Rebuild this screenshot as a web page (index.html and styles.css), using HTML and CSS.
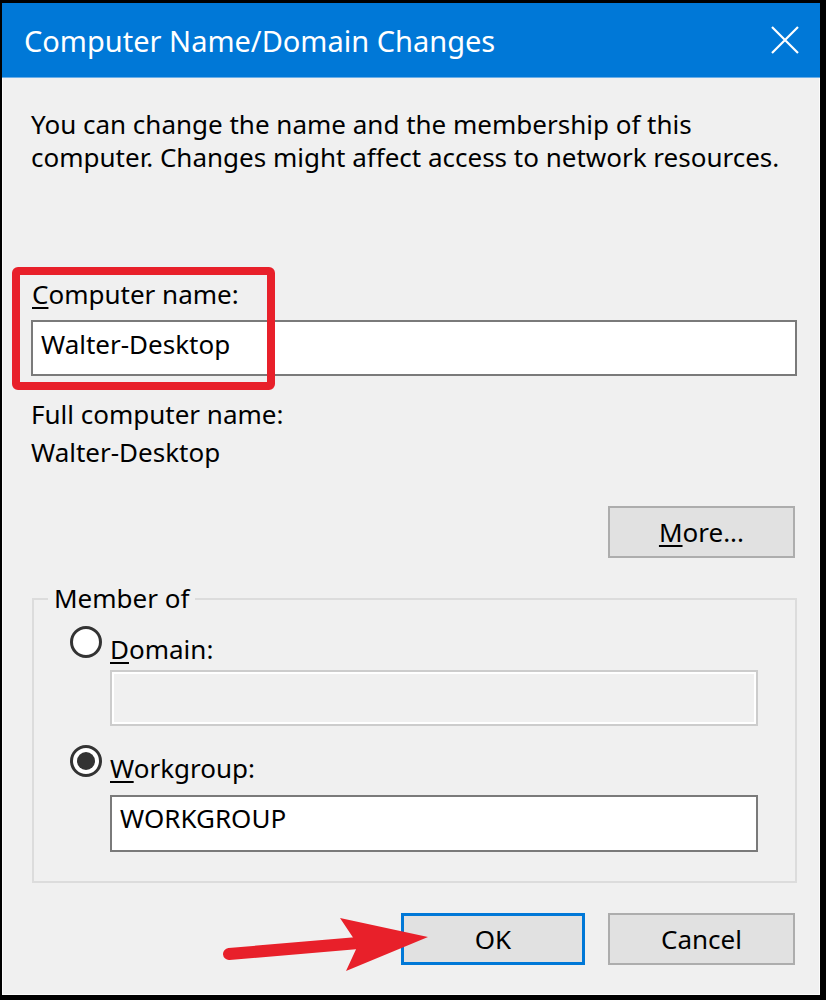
FILE: index.html
```html
<!DOCTYPE html>
<html lang="en">
<head>
    <meta charset="UTF-8">
    <title>Computer Name/Domain Changes</title>
    <link rel="stylesheet" href="styles.css">
</head>
<body>
    <div class="window">
        <div class="titlebar">
            <span class="title">Computer Name/Domain Changes</span>
            <svg class="close" width="28" height="28" viewBox="0 0 28 28">
                <path d="M1 1 L27 27 M27 1 L1 27" stroke="#fff" stroke-width="2.2" fill="none"/>
            </svg>
        </div>

        <div class="content">
            <p class="intro">You can change the name and the membership of this<br>computer. Changes might affect access to network resources.</p>

            <div class="label name-label"><u>C</u>omputer name:</div>
            <div class="textbox name-box">Walter-Desktop</div>

            <div class="label full-label">Full computer name:</div>
            <div class="label full-value">Walter-Desktop</div>

            <div class="more-row">
                <button class="button"><u>M</u>ore...</button>
            </div>

            <fieldset class="group">
                <legend>Member of</legend>

                <div class="radio-row domain-row">
                    <span class="radio"></span>
                    <span><u>D</u>omain:</span>
                </div>
                <div class="textbox disabled domain-box"></div>

                <div class="radio-row workgroup-row">
                    <span class="radio checked"></span>
                    <span><u>W</u>orkgroup:</span>
                </div>
                <div class="textbox group-box">WORKGROUP</div>
            </fieldset>

            <div class="actions">
                <button class="button default">OK</button>
                <button class="button">Cancel</button>
            </div>
        </div>

        <!-- annotations -->
        <div class="highlight"></div>
        <svg class="arrow" width="826" height="1000" viewBox="0 0 826 1000">
            <line x1="229" y1="954" x2="370" y2="942" stroke="#e8202a" stroke-width="12" stroke-linecap="round"/>
            <polygon points="340,918 428,937 346,971 358,945" fill="#e8202a"/>
        </svg>
    </div>
</body>
</html>
```

FILE: styles.css
```css
body {
    margin: 0;
    background-color: #000;
    font-family: "Noto Sans", "Open Sans", sans-serif;
    font-size: 26px;
    color: #000;
}

.window {
    position: relative;
    margin: 3px 6px 0 2px;
    height: 992px;
    display: flex;
    flex-direction: column;
    background-color: #f0f0f0;
}

.titlebar {
    height: 74px;
    display: flex;
    align-items: center;
    padding: 0 21px 0 22px;
    background-color: #0078d7;
    color: #fff;
    border-bottom: 1px solid #6aaee8;
}

.title {
    font-size: 29px;
}

.close {
    margin-left: auto;
}

.content {
    flex: 1;
    padding: 0 22px 0 28px;
    border: 1px solid #fbfbfb;
    border-top: none;
    line-height: 33px;
}

.intro {
    margin: 30px 0 0 0;
}

.label {
    height: 33px;
}

u {
    text-decoration-thickness: 2px;
    text-underline-offset: 3px;
}

.name-label {
    margin-top: 104px;
    padding-left: 1px;
}

.textbox {
    box-sizing: border-box;
    height: 56px;
    padding: 6px 0 0 8px;
    background-color: #fff;
    border: 2px solid #7a7a7a;
}

.name-box {
    margin: 9px 0 0 0;
}

.full-label {
    margin-top: 22px;
}

.full-value {
    margin-top: 5px;
}

.more-row,
.actions {
    display: flex;
    justify-content: flex-end;
    gap: 23px;
    padding-right: 2px;
}

.more-row {
    margin-top: 37px;
}

.button {
    box-sizing: border-box;
    width: 187px;
    height: 52px;
    padding: 0;
    font-family: inherit;
    font-size: 26px;
    color: #000;
    background-color: #e1e1e1;
    border: 2px solid #adadad;
}

.button.default {
    width: 184px;
    border: 3px solid #0078d7;
}

.group {
    margin: 24px 0 0 1px;
    padding: 0 0 29px 0;
    border: 2px solid #dcdcdc;
    min-width: 0;
}

.group legend {
    margin-left: 14px;
    padding: 0 6px;
}

.radio-row {
    display: flex;
    align-items: center;
    gap: 8px;
    padding-left: 36px;
    height: 33px;
}

.radio {
    box-sizing: border-box;
    width: 32px;
    height: 32px;
    margin-top: -16px;
    border: 3px solid #333;
    border-radius: 50%;
    background-color: #fff;
    display: flex;
    align-items: center;
    justify-content: center;
}

.radio.checked::after {
    content: "";
    width: 18px;
    height: 18px;
    border-radius: 50%;
    background-color: #333;
}

.domain-row {
    margin-top: 18px;
}

.domain-box,
.group-box {
    margin: 4px 37px 0 76px;
}

.textbox.disabled {
    background-color: #f0f0f0;
    border-color: #cccccc;
    box-shadow: inset 0 0 0 2px #fff;
}

.workgroup-row {
    margin-top: 26px;
}

.group-box {
    margin-top: 10px;
    height: 57px;
    padding-top: 5px;
}

.actions {
    margin-top: 30px;
}

.highlight {
    position: absolute;
    left: 10px;
    top: 264px;
    width: 263px;
    height: 123px;
    box-sizing: border-box;
    border: 8px solid #e8202a;
    border-radius: 6px;
}

.arrow {
    position: absolute;
    left: -2px;
    top: -3px;
    pointer-events: none;
}
```
